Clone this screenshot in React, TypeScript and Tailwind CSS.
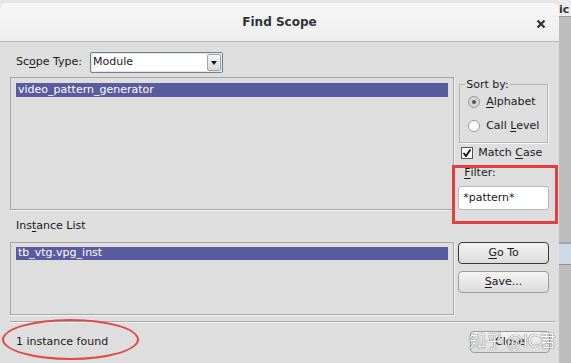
import React from "react";

const font = { fontFamily: '"DejaVu Sans", "Noto Sans", sans-serif' };

function U({ children }: { children: React.ReactNode }) {
    return <span className="underline decoration-1 underline-offset-2">{children}</span>;
}

function Radio({ checked, children }: { checked?: boolean; children: React.ReactNode }) {
    return (
        <div className="flex h-[12px] items-center">
            <div
                className={
                    "flex h-[12px] w-[12px] items-center justify-center rounded-full border border-[#9a9a9a] " +
                    (checked ? "bg-[#d4d4d4]" : "bg-white")
                }
            >
                {checked && <div className="h-[4px] w-[4px] rounded-full bg-[#555]" />}
            </div>
            <span className="ml-[6px]">{children}</span>
        </div>
    );
}

function Button({ focused, children }: { focused?: boolean; children: React.ReactNode }) {
    return (
        <div
            className={
                "flex h-[22px] items-center justify-center rounded-[4px] bg-gradient-to-b from-[#f4f4f4] to-[#dcdcdc] " +
                (focused ? "border border-[#3a3a3a]" : "border border-[#9b9b9b]")
            }
        >
            {children}
        </div>
    );
}

export default function App() {
    return (
        <div className="flex h-[363px] w-[571px] overflow-hidden bg-[#e6e6e6] text-[11px] text-[#1a1a1a]" style={font}>
            {/* dialog */}
            <div className="relative mt-[3px] flex w-[559px] flex-col overflow-hidden rounded-t-[6px] bg-[#dedede]">
                {/* title bar */}
                <div className="relative flex h-[39px] shrink-0 items-center justify-center border-b border-[#b9b9b9] bg-gradient-to-b from-[#f6f6f6] to-[#eeeeee]">
                    <span className="text-[12px] font-bold text-[#2e3436]">Find Scope</span>
                    <svg className="absolute right-[13px] top-[16px]" width="10" height="10" viewBox="0 0 10 10">
                        <path d="M1.5 1.5 L8.5 8.5 M8.5 1.5 L1.5 8.5" stroke="#2e3436" strokeWidth="2.2" />
                    </svg>
                </div>

                {/* body */}
                <div className="flex flex-1 flex-col px-[10px] pt-[10px]">
                    {/* scope type */}
                    <div className="flex h-[21px] items-center">
                        <span className="ml-[6px] w-[74px]">
                            Sc<U>o</U>pe Type:
                        </span>
                        <div className="flex h-[21px] w-[133px] items-center rounded-[2px] border border-[#6f7f92] bg-white shadow-[inset_0_0_0_1px_#dfe6ee]">
                            <span className="ml-[2px] flex-1">Module</span>
                            <div className="mr-[1px] flex h-[17px] w-[14px] items-center justify-center rounded-[2px] border border-[#9da6b0] bg-gradient-to-b from-[#f7f7f7] to-[#d8d8d8]">
                                <svg width="8" height="8" viewBox="0 0 8 8">
                                    <path d="M1 2 L7 2 L4 6 Z" fill="#111" />
                                </svg>
                            </div>
                        </div>
                    </div>

                    {/* main */}
                    <div className="mt-[4px] flex">
                        {/* left column */}
                        <div className="flex w-[445px] flex-col">
                            <div className="h-[133px] border border-[#a6a6a6] px-[5px] pt-[5px] shadow-[1px_1px_0_#f4f4f4]">
                                <div className="flex h-[14px] items-center bg-[#5b5b9f] pl-[2px] text-white">
                                    video_pattern_generator
                                </div>
                            </div>
                            <div className="flex h-[32px] items-center pl-[6px] pt-[1px]">
                                Ins<U>t</U>ance List
                            </div>
                            <div className="h-[73px] border border-[#a6a6a6] px-[5px] pt-[4px] shadow-[1px_1px_0_#f4f4f4]">
                                <div className="flex h-[13px] items-center bg-[#5b5b9f] pl-[2px] text-white">
                                    tb_vtg.vpg_inst
                                </div>
                            </div>
                        </div>

                        {/* right column */}
                        <div className="ml-[4px] flex w-[91px] flex-col">
                            <div className="relative ml-[1px] mt-[7px] flex h-[59px] w-[89px] flex-col gap-[12px] border border-[#b3b3b3] pl-[8px] pt-[11px] shadow-[1px_1px_0_#f6f6f6]">
                                <span className="absolute -top-[8px] left-[5px] bg-[#dedede] px-[1px]">Sort by:</span>
                                <Radio checked>
                                    <U>A</U>lphabet
                                </Radio>
                                <Radio>
                                    Call <U>L</U>evel
                                </Radio>
                            </div>
                            <div className="mt-[4px] flex h-[12px] items-center">
                                <div className="ml-[3px] flex h-[12px] w-[12px] items-center justify-center border border-[#555] bg-white">
                                    <svg width="10" height="10" viewBox="0 0 10 10">
                                        <path d="M1.5 5 L4 8 L8.5 1.5" stroke="#111" strokeWidth="1.8" fill="none" />
                                    </svg>
                                </div>
                                <span className="ml-[5px]">
                                    Match <U>C</U>ase
                                </span>
                            </div>
                            <div className="flex h-[27px] items-center pl-[6px] pt-[1px]">
                                <U>F</U>ilter:
                            </div>
                            <div className="flex h-[24px] items-center rounded-[3px] border border-[#b8b8b8] bg-white pl-[4px]">
                                *pattern*
                            </div>
                            <div className="mt-[32px]">
                                <Button focused>
                                    <U>G</U>o To
                                </Button>
                            </div>
                            <div className="mt-[7px]">
                                <Button>
                                    <U>S</U>ave...
                                </Button>
                            </div>
                        </div>
                    </div>

                    {/* separator */}
                    <div className="mt-[6px] w-[545px] border-t border-[#a9a9a9] shadow-[0_1px_0_#f4f4f4]" />

                    {/* footer */}
                    <div className="flex w-[540px] items-center pt-[9px]">
                        <span className="ml-[6px]">1 instance found</span>
                        <div className="ml-auto w-[80px]">
                            <Button>Close</Button>
                        </div>
                    </div>
                </div>

                {/* annotations */}
                <div className="absolute left-[452px] top-[162px] h-[59px] w-[106px] border-[3px] border-[#e04040]" />
                <div className="absolute left-[2px] top-[316px] h-[41px] w-[137px] rounded-[50%] border-2 border-[#e04848]" />
                <div
                    className="absolute left-[469px] top-[326px] whitespace-nowrap text-[17px] leading-[22px] text-white opacity-90 [text-shadow:0_0_1px_#555,0_0_1px_#555]"
                    style={{ fontFamily: '"Noto Sans CJK SC", "DejaVu Sans", sans-serif' }}
                >
                    知乎 @IC君
                </div>
            </div>

            {/* background window strip */}
            <div className="flex w-[12px] flex-col bg-[#bdbdbd]">
                <div className="h-[16px] overflow-hidden bg-[#ececec] pt-[2px] text-[11px] font-bold text-[#333]">ic</div>
                <div className="h-[1px] bg-[#9a9a9a]" />
                <div className="mt-[225px] h-[2px] bg-[#9aa6b6]" />
                <div className="h-[20px] bg-[#cfd8e6]" />
                <div className="h-[1px] bg-[#8f8f8f]" />
            </div>
        </div>
    );
}
